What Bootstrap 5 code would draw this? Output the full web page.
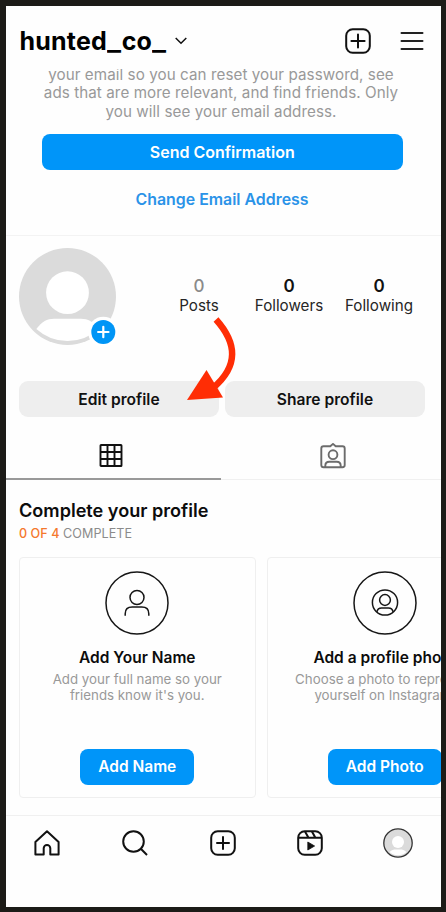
<!DOCTYPE html>
<html lang="en">
<head>
<meta charset="utf-8">
<meta name="viewport" content="width=device-width, initial-scale=1">
<title>hunted_co_</title>
<link href="https://cdn.jsdelivr.net/npm/bootstrap@5.3.0/dist/css/bootstrap.min.css" rel="stylesheet">
<style>
  body { background: #1c1b17; font-family: Inter, "Liberation Sans", sans-serif; color: #0c0c0c; }
  svg { display: block; flex: none; }
  .screen { width: 435px; height: 901px; margin: 6px 5px 5px 6px; background: #fefefe; }
  .topbar { height: 63px; padding: 7px 17.5px 0 13.5px; }
  .username { font-size: 25px; font-weight: 700; letter-spacing: .2px; line-height: 32px; color: #000; width: 150px; }
  .username span { display: inline-block; transform: scaleX(1.18); transform-origin: left; margin-right: 2.6px; }
  .chevron { margin-left: 5px; }
  .menu-icon { margin-left: 29px; }
  .email-box { height: 167px; border-bottom: 1px solid #f3f3f3; }
  .email-text { height: 65px; padding-right: 5px; font-size: 15.2px; line-height: 18.6px; color: #999; letter-spacing: .07px; }
  .email-text div { margin-top: -3.4px; }
  .btn-blue { --bs-btn-color: #fff; --bs-btn-bg: #0095f9; --bs-btn-hover-bg: #0086e0; --bs-btn-hover-color: #fff; height: 36px; border: 0; border-radius: 8px; font-size: 16px; font-weight: 600; line-height: 36px; padding: 0; }
  .send { margin: 0 38px 0 35.5px; width: 361.5px; }
  .change { font-size: 15.9px; font-weight: 600; line-height: 20px; margin-top: 20px; padding-right: 3px; color: #2a93e8; }
  .profile-row { height: 145px; padding: 11.5px 17px 0 13px; }
  .stats { padding-top: 28px; width: 270px; }
  .stat { width: 90px; font-size: 15.2px; line-height: 20.5px; color: #262626; }
  .stat b { display: block; font-size: 17px; font-weight: 600; color: #111; }
  .stat .none { color: #8a8a8a; font-weight: 500; }
  .actions { padding: 0 16px 0 13px; gap: 6px; }
  .btn-soft { --bs-btn-bg: #eee; --bs-btn-hover-bg: #e2e2e2; height: 36px; border: 0; border-radius: 9px; font-size: 15.6px; font-weight: 600; line-height: 36px; padding: 1px 0 0; color: #111; }
  .tabs { height: 63px; border-bottom: 1px solid #f0f0f0; }
  .tab { height: 63px; padding-top: 26px; }
  .tab.first { width: 215px; border-bottom: 2px solid #999; padding-right: 5px; }
  .tab.second { padding-left: 3px; }
  .complete { padding: 17.5px 0 0 13px; height: 77px; }
  .complete h1 { font-size: 18.1px; font-weight: 600; line-height: 24px; margin: 0; }
  .complete p { font-size: 12.6px; line-height: 23px; margin: 0; color: #8b8b8b; letter-spacing: .05px; }
  .complete .count { color: #f5782d; font-weight: 500; }
  .cards { padding-left: 13px; gap: 11px; height: 241px; }
  .step { flex: none; width: 236.5px; height: 241px; border: 1px solid #efefef; border-radius: 4px; padding-top: 13px; }
  .step h2 { font-size: 15.5px; font-weight: 600; line-height: 20px; margin: 13px 0 4px; white-space: nowrap; }
  .step p { font-size: 13.3px; line-height: 15.6px; height: 31px; color: #999; margin: 0 0 46px; white-space: nowrap; }
  .step .btn-blue { width: 114px; font-size: 15.5px; }
  .bottom { margin-top: 17px; border-top: 1px solid #f0f0f0; padding: 11.5px 28px 0 26px; height: 92px; }
  .slot { width: 30px; height: 31px; }
  .pointer { left: 185px; top: 312px; z-index: 2; }
</style>
<script src="https://cdn.jsdelivr.net/npm/bootstrap@5.3.0/dist/js/bootstrap.bundle.min.js"></script>
</head>
<body class="overflow-hidden">
<main class="screen overflow-hidden">
  <header class="topbar d-flex align-items-center">
    <div class="username">hunted<span>_</span>co<span>_</span></div>
    <svg class="chevron" width="12" height="8" viewBox="0 0 12 8" fill="none" stroke="#111" stroke-width="1.5"><path d="M.7 1 6 6.3 11.3 1"/></svg>
    <svg class="ms-auto" width="26" height="26" viewBox="0 0 26 26" fill="none" stroke="#111" stroke-width="2" stroke-linecap="round"><rect x="1.2" y="1.2" width="23.6" height="23.6" rx="6.5"/><path d="M13 6.4v13.2M6.4 13h13.2"/></svg>
    <svg class="menu-icon" width="24" height="20" viewBox="0 0 24 20" stroke="#222" stroke-width="2" stroke-linecap="round"><path d="M1.500 2h21M1.500 10h21M1.500 18h21"/></svg>
  </header>

  <section class="email-box text-center">
    <div class="email-text overflow-hidden"><div>your email so you can reset your password, see<br>ads that are more relevant, and find friends. Only<br>you will see your email address.</div></div>
    <button class="btn btn-blue send">Send Confirmation</button>
    <div class="change">Change Email Address</div>
  </section>

  <section class="profile-row d-flex justify-content-between">
    <svg width="100" height="100" viewBox="0 0 100 100">
      <circle cx="48.500" cy="48.500" r="48.500" fill="#dbdbdb"/>
      <circle cx="48.500" cy="44.700" r="21.400" fill="#fff"/>
      <path d="M17.300 81C23 73.500 28 70.700 35 70.700h27c7 0 12 2.800 17.700 10.300A46.500 46.500 0 0 1 17.300 81Z" fill="#fff"/>
      <circle cx="84.300" cy="84" r="15.200" fill="#fff"/>
      <circle cx="84.300" cy="84" r="12" fill="#0095f6"/>
      <path d="M84.300 78.800v10.400M79.100 84h10.400" stroke="#fff" stroke-width="2.200" stroke-linecap="round"/>
    </svg>
    <div class="stats d-flex text-center">
      <div class="stat"><b class="none">0</b>Posts</div>
      <div class="stat"><b>0</b>Followers</div>
      <div class="stat"><b>0</b>Following</div>
    </div>
  </section>

  <div class="actions d-flex">
    <button class="btn btn-soft flex-fill w-50">Edit profile</button>
    <button class="btn btn-soft flex-fill w-50">Share profile</button>
  </div>

  <nav class="tabs d-flex">
    <div class="tab first d-flex justify-content-center">
      <svg width="24" height="24" viewBox="0 0 24 24" fill="none" stroke="#111" stroke-width="1.900"><rect x="1.500" y="2" width="21" height="21" rx=".6"/><path d="M8.500 2v21M15.500 2v21M1.500 9h21M1.500 16h21"/></svg>
    </div>
    <div class="tab second flex-fill d-flex justify-content-center">
      <svg width="26" height="26" viewBox="0 0 26 26" fill="none" stroke="#6c6c6c" stroke-width="1.900" stroke-linejoin="round"><path d="M3.500 3.200h6.800L13 .9l2.700 2.300h6.800q2.200 0 2.200 2.200v16.700q0 2.200-2.200 2.200h-19q-2.200 0-2.200-2.200V5.400q0-2.200 2.200-2.200Z"/><circle cx="13" cy="11.700" r="4.400"/><path d="M5.300 24.200v-1.500q0-4 4-4h7.400q4 0 4 4v1.500"/></svg>
    </div>
  </nav>

  <section class="complete">
    <h1>Complete your profile</h1>
    <p><span class="count">0 OF 4</span> COMPLETE</p>
  </section>

  <section class="cards d-flex">
    <article class="step d-flex flex-column align-items-center text-center">
      <svg width="64" height="64" viewBox="0 0 64 64" fill="none" stroke="#161616" stroke-width="1.500"><circle cx="32" cy="32" r="31"/><circle cx="32" cy="26.500" r="7"/><path d="M20.200 44.700v-2q0-6.700 7-6.700h9.600q7 0 7 6.700v2"/></svg>
      <h2>Add Your Name</h2>
      <p>Add your full name so your<br>friends know it's you.</p>
      <button class="btn btn-blue">Add Name</button>
    </article>
    <article class="step d-flex flex-column align-items-center text-center">
      <svg width="64" height="64" viewBox="0 0 64 64" fill="none" stroke="#161616" stroke-width="1.500"><circle cx="32" cy="32" r="31"/><circle cx="32" cy="31.500" r="12.600"/><circle cx="32" cy="29" r="5.400"/><path d="M23.800 41q1-3.900 4.700-3.900h7q3.700 0 4.700 3.900"/></svg>
      <h2>Add a profile photo</h2>
      <p>Choose a photo to represent<br>yourself on Instagram.</p>
      <button class="btn btn-blue">Add Photo</button>
    </article>
  </section>

  <nav class="bottom d-flex justify-content-between">
    <div class="slot d-flex align-items-center justify-content-center">
      <svg width="26" height="26" viewBox="0 0 26 26" fill="none" stroke="#111" stroke-width="2" stroke-linejoin="round"><path d="M13 1.200 24.600 12v12.600h-8.300v-6.400a3.300 3.300 0 0 0-6.600 0v6.400H1.400V12Z"/></svg>
    </div>
    <div class="slot d-flex align-items-center justify-content-center">
      <svg width="26" height="26" viewBox="0 0 26 26" fill="none" stroke="#111" stroke-width="2"><circle cx="11.500" cy="11.500" r="10.300"/><path d="m18.800 18.800 6.200 6.200"/></svg>
    </div>
    <div class="slot d-flex align-items-center justify-content-center">
      <svg width="26" height="26" viewBox="0 0 26 26" fill="none" stroke="#111" stroke-width="2" stroke-linecap="round"><rect x="1.200" y="1.200" width="23.600" height="23.600" rx="6.500"/><path d="M13 7v12M7 13h12"/></svg>
    </div>
    <div class="slot d-flex align-items-center justify-content-center">
      <svg width="26" height="26" viewBox="0 0 26 26" fill="none" stroke="#111" stroke-width="2"><rect x="1.200" y="1.200" width="23.600" height="23.600" rx="6.500"/><path d="M1.500 7.800h23M8 1.500l3.500 6.300M14.800 1.200l3.600 6.600"/><path d="M10.800 12v8l6.800-4Z" fill="#111" stroke-width=".8" stroke-linejoin="round"/></svg>
    </div>
    <div class="slot d-flex align-items-center justify-content-center">
      <svg width="30" height="30" viewBox="0 0 30 30"><circle cx="15" cy="15" r="14.200" fill="#dbdbdb" stroke="#333" stroke-width="1.300"/><circle cx="15" cy="14" r="6" fill="#fff"/><path d="M6.600 24q2.300-2.600 4.700-2.600h7.400q2.400 0 4.700 2.600a12.600 12.600 0 0 1-16.800 0Z" fill="#fff"/></svg>
    </div>
  </nav>
</main>

<svg class="pointer position-absolute" width="56" height="94" viewBox="0 0 56 94">
  <path d="M31 7.500C52 31 54 54 28 76" fill="none" stroke="#ff2d05" stroke-width="6.500"/>
  <path d="M2 88 21.500 58 38 85.500Z" fill="#ff2d05"/>
</svg>
</body>
</html>
